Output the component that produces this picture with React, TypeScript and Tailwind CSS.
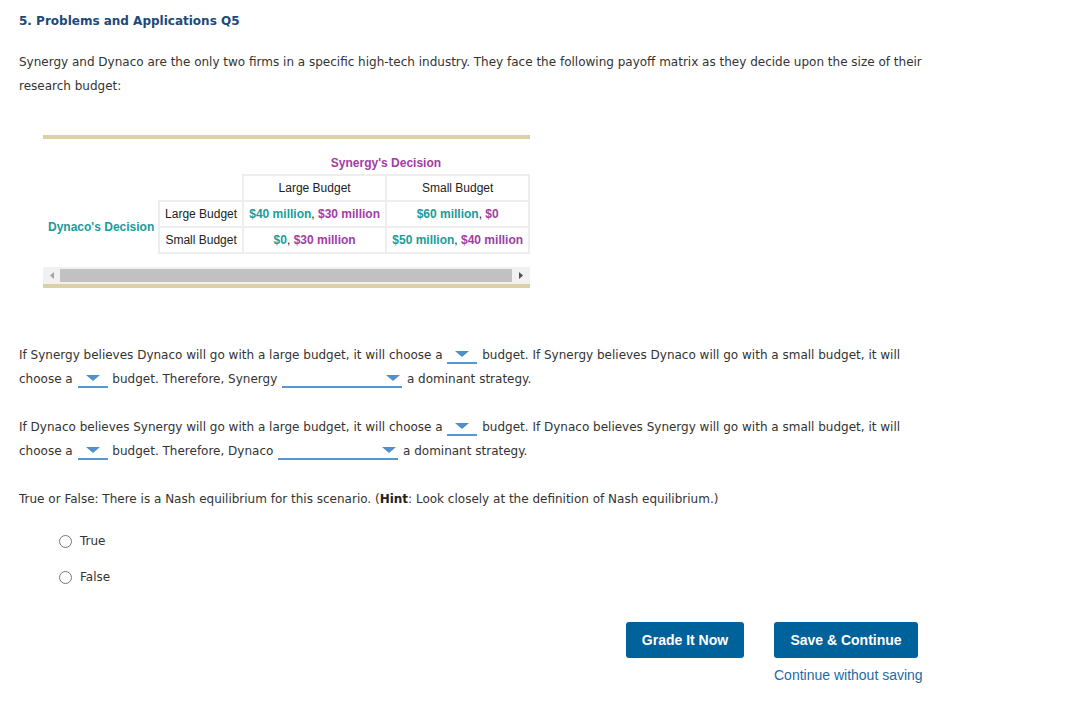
import React from 'react';

const verdana = { fontFamily: 'Verdana, "DejaVu Sans", sans-serif' };

function Caret() {
  return (
    <svg width="14" height="6" viewBox="0 0 14 6" className="block">
      <path d="M0 0 L14 0 L7 6 Z" fill="#4f8fcb" />
    </svg>
  );
}

function Pick({ wide = false }: { wide?: boolean }) {
  return (
    <span
      className={`mx-[1px] inline-block h-[17px] overflow-hidden border-b-2 border-[#5a97cf] align-[-5px] ${
        wide ? 'w-[120px]' : 'w-[30px]'
      }`}
    >
      <span className={`flex pt-[4px] ${wide ? 'justify-end pr-[2px]' : 'justify-center'}`}>
        <Caret />
      </span>
    </span>
  );
}

function Radio({ label }: { label: string }) {
  return (
    <label className="flex h-[24px] items-center gap-[8px] pl-[40px] text-[12px] text-[#333]">
      <span className="h-[13px] w-[13px] rounded-full border border-[#777] bg-white" />
      {label}
    </label>
  );
}

function PayoffTable() {
  const cell = 'border-2 border-[#eeeeee] h-[26px] px-[4px] text-center whitespace-nowrap';
  const teal = 'font-bold text-[#1a9c9a]';
  const plum = 'font-bold text-[#a23ca4]';
  return (
    <div className="ml-[24px] mt-[37px] w-[487px] border-y-4 border-[#dcd1a5]">
      <table
        className="mt-[12px] border-collapse text-[12px] text-[#222]"
        style={{ fontFamily: 'Arial, "Liberation Sans", sans-serif' }}
      >
        <colgroup>
          <col className="w-[116px]" />
          <col className="w-[84px]" />
          <col className="w-[144px]" />
          <col className="w-[143px]" />
        </colgroup>
        <tbody>
          <tr>
            <td colSpan={2} />
            <td colSpan={2} className={`h-[24px] text-center ${plum}`}>
              Synergy's Decision
            </td>
          </tr>
          <tr>
            <td colSpan={2} />
            <td className={cell}>Large Budget</td>
            <td className={cell}>Small Budget</td>
          </tr>
          <tr>
            <td rowSpan={2} className={`pl-[5px] pr-[4px] whitespace-nowrap ${teal}`}>
              Dynaco's Decision
            </td>
            <td className={cell}>Large Budget</td>
            <td className={cell}>
              <span className={teal}>$40 million</span>, <span className={plum}>$30 million</span>
            </td>
            <td className={cell}>
              <span className={teal}>$60 million</span>, <span className={plum}>$0</span>
            </td>
          </tr>
          <tr>
            <td className={cell}>Small Budget</td>
            <td className={cell}>
              <span className={teal}>$0</span>, <span className={plum}>$30 million</span>
            </td>
            <td className={cell}>
              <span className={teal}>$50 million</span>, <span className={plum}>$40 million</span>
            </td>
          </tr>
        </tbody>
      </table>
      <div className="mt-[13px] flex h-[17px] items-center bg-[#f1f1f1]">
        <span className="flex w-[17px] justify-center">
          <svg width="4" height="7" viewBox="0 0 4 7">
            <path d="M4 0 L0 3.5 L4 7 Z" fill="#a3a3a3" />
          </svg>
        </span>
        <span className="h-[13px] w-[452px] bg-[#c1c1c1]" />
        <span className="flex flex-1 justify-center">
          <svg width="4" height="7" viewBox="0 0 4 7">
            <path d="M0 0 L4 3.5 L0 7 Z" fill="#505050" />
          </svg>
        </span>
      </div>
    </div>
  );
}

export default function App() {
  return (
    <div className="min-h-[710px] bg-white pb-[20px] pl-[19px] pt-[13px] text-[#333]" style={verdana}>
      <h1 className="text-[12px] font-bold leading-[16px] text-[#1c4a7a]">5. Problems and Applications Q5</h1>

      <p className="mt-[21px] max-w-[920px] text-[12px] leading-[24px]">
        Synergy and Dynaco are the only two firms in a specific high-tech industry. They face the following payoff
        matrix as they decide upon the size of their research budget:
      </p>

      <PayoffTable />

      <p className="mt-[55px] max-w-[900px] text-[12px] leading-[24px]">
        If Synergy believes Dynaco will go with a large budget, it will choose a <Pick /> budget. If Synergy believes
        Dynaco will go with a small budget, it will choose a <Pick /> budget. Therefore, Synergy <Pick wide /> a
        dominant strategy.
      </p>

      <p className="mt-[24px] max-w-[900px] text-[12px] leading-[24px]">
        If Dynaco believes Synergy will go with a large budget, it will choose a <Pick /> budget. If Dynaco believes
        Synergy will go with a small budget, it will choose a <Pick /> budget. Therefore, Dynaco <Pick wide /> a
        dominant strategy.
      </p>

      <p className="mt-[24px] text-[12px] leading-[24px]">
        True or False: There is a Nash equilibrium for this scenario. (<b className="text-[#222]">Hint</b>: Look closely
        at the definition of Nash equilibrium.)
      </p>

      <div className="mt-[18px] flex flex-col gap-[12px]">
        <Radio label="True" />
        <Radio label="False" />
      </div>

      <div
        className="mt-[33px] flex justify-end gap-[30px] pr-[164px]"
        style={{ fontFamily: 'Arial, "Liberation Sans", sans-serif' }}
      >
        <button
          type="button"
          className="h-[36px] w-[118px] rounded-[3px] bg-[#00629b] text-[14px] font-bold text-white"
        >
          Grade It Now
        </button>
        <div className="flex w-[149px] flex-col items-start">
          <button
            type="button"
            className="h-[36px] w-[144px] rounded-[3px] bg-[#00629b] text-[14px] font-bold text-white"
          >
            Save &amp; Continue
          </button>
          <a className="mt-[7px] text-[14px] text-[#1f6aa3]">Continue without saving</a>
        </div>
      </div>
    </div>
  );
}
